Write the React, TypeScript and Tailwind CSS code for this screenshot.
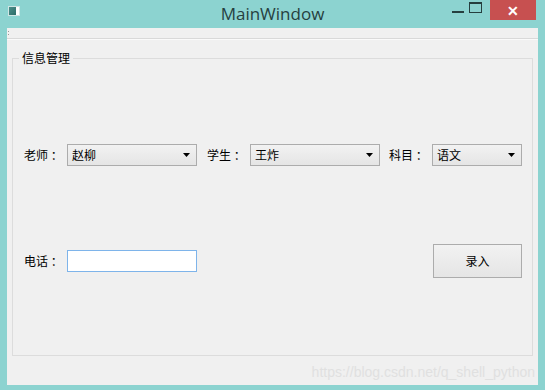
import React from "react";

const Combo = ({ value, width }: { value: string; width: string }) => (
  <div
    className={`${width} h-[22px] flex items-center justify-between pl-[4px] pr-[6px] border border-[#acacac] bg-gradient-to-b from-[#f2f2f2] to-[#e5e5e5] text-[12px] text-black`}
  >
    <span>{value}</span>
    <svg width="7" height="4" viewBox="0 0 7 4">
      <path d="M0 0 L7 0 L3.5 4 Z" fill="#000" />
    </svg>
  </div>
);

export default function App() {
  return (
    <div
      className="w-[545px] h-[390px] bg-[#8cd3d0] flex flex-col overflow-hidden"
      style={{ fontFamily: '"Microsoft YaHei", "Noto Sans CJK SC", sans-serif' }}
    >
      {/* title bar */}
      <div className="h-[28px] flex items-start relative">
        <div className="mt-[6px] ml-[8px] w-[12px] h-[10px] bg-white border border-[#cfe5e4] flex">
          <div className="w-[7px] h-full bg-gradient-to-br from-[#4b8f8a] to-[#2d6b67]" />
        </div>
        <div className="absolute left-0 right-0 top-[1px] text-center text-[17px] text-[#263f3f]" style={{ fontFamily: '"Open Sans", "Noto Sans", sans-serif' }}>
          MainWindow
        </div>
        <div className="ml-auto flex items-start">
          <div className="w-[12px] h-[2px] bg-[#263f3f] mt-[11px] mr-[5px]" />
          <div className="w-[13px] h-[11px] border border-[#263f3f] border-t-2 mt-[2px] mr-[8px]" />
          <div className="w-[46px] h-[20px] bg-[#c75050] flex items-center justify-center text-white text-[14px] font-bold mr-[9px]">
            ✕
          </div>
        </div>
      </div>

      {/* client */}
      <div className="flex-1 mx-[7px] mb-[5px] bg-[#f0f0f0] flex flex-col">
        <div className="h-[11px] relative border-b border-[#d9d9d9]">
          <div className="absolute left-[1px] top-[3px] flex flex-col gap-[2px]">
            <div className="w-[1px] h-[1px] bg-[#9a9a9a]" />
            <div className="w-[1px] h-[1px] bg-[#9a9a9a]" />
          </div>
        </div>
        <div className="h-[1px] bg-[#fafafa]" />

        <div className="flex-1 flex flex-col px-[5px] pt-[18px] pb-[29px] relative">
          <div className="flex-1 border border-[#dcdcdc] relative flex flex-col">
            <div className="absolute -top-[9px] left-[6px] px-[3px] bg-[#f0f0f0] text-[12px] text-black leading-[16px]">
              信息管理
            </div>
            <div className="flex items-center mt-[85px] text-[12px] text-black">
              <span className="ml-[11px] w-[43px]">老师 ：</span>
              <Combo value="赵柳" width="w-[130px]" />
              <span className="ml-[10px] w-[43px]">学生 ：</span>
              <Combo value="王炸" width="w-[130px]" />
              <span className="ml-[9px] w-[43px]">科目 ：</span>
              <Combo value="语文" width="w-[90px]" />
            </div>
            <div className="flex items-center mt-[78px] text-[12px] text-black">
              <span className="ml-[11px] w-[43px]">电话 ：</span>
              <div className="w-[130px] h-[22px] bg-white border border-[#7eb4ea]" />
              <div className="ml-auto mr-[10px] w-[89px] h-[34px] border border-[#acacac] bg-gradient-to-b from-[#f2f2f2] to-[#e5e5e5] flex items-center justify-center">
                录入
              </div>
            </div>
          </div>
          <div className="absolute right-[3px] bottom-[2px] text-[14px] text-[#e0e0e0]" style={{ fontFamily: '"Liberation Sans", sans-serif' }}>
            https://blog.csdn.net/q_shell_python
          </div>
        </div>
      </div>
    </div>
  );
}
